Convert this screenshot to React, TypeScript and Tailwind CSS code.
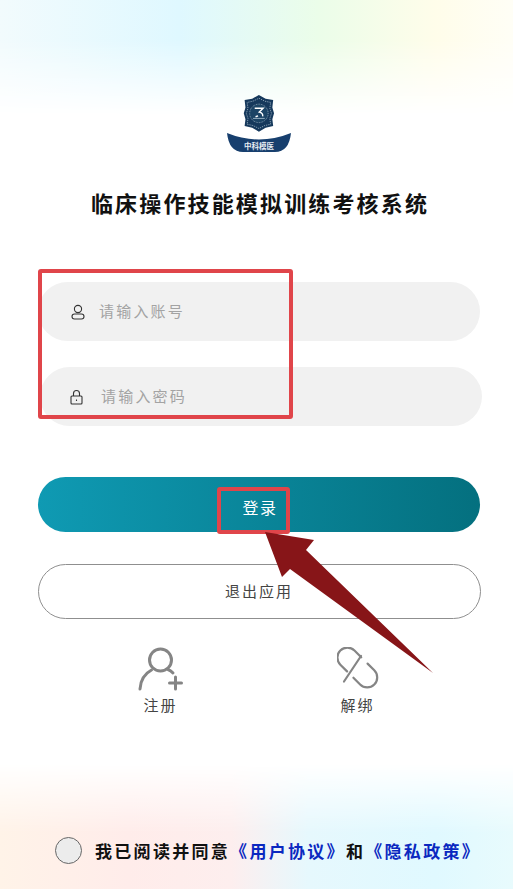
import React from 'react';

const Logo = () => (
  <svg width="70" height="62" viewBox="0 0 70 62">
    {/* badge */}
    <g transform="translate(5.500 -3) scale(0.840)">
      <polygon points="35,7 43,11.500 52,13 51,22 53,29 51,36 52,44 43,46 35,51 27,46 18,44 19,36 17,29 19,22 18,13 27,11.500" fill="#16395c" />
      <polygon points="35,11 42,14.500 49,16 48,23 50,29 48,35 49,42 42,43.500 35,47 28,43.500 21,42 22,35 20,29 22,23 21,16 28,14.500" fill="none" stroke="#b9ccd9" strokeWidth="0.800" strokeDasharray="1.500 1.200" />
      <circle cx="35" cy="29" r="11" fill="#1c4465" stroke="#d5e1e8" strokeWidth="0.700" strokeDasharray="1 1" />
      <path d="M30 23h10l-4.500 4.500c3 .5 4.500 2.500 4 5M31 33l3-1" fill="none" stroke="#ffffff" strokeWidth="1.700" />
      <path d="M28 35h14" stroke="#a9c0cf" strokeWidth="1" />
    </g>
    {/* ribbon */}
    <path d="M3 41q32 13 64 0q-2 19-16 19H19Q5 60 3 41z" fill="#173f6e" />
    <text x="35" y="57" textAnchor="middle" fontSize="7.500" fontWeight="700" fill="#e8eef4" fontFamily="'Noto Sans CJK SC', sans-serif">中科模医</text>
  </svg>
);

const UserIcon = () => (
  <svg width="16" height="16" viewBox="0 0 16 16" fill="none" stroke="#333" strokeWidth="1.100">
    <circle cx="8" cy="5" r="3.600" />
    <rect x="2" y="10" width="12" height="5" rx="2.500" />
  </svg>
);

const LockIcon = () => (
  <svg width="15" height="16" viewBox="0 0 15 16" fill="none" stroke="#333" strokeWidth="1.100">
    <path d="M4.500 7V4.500a3 3 0 0 1 6 0V7" />
    <rect x="2" y="7" width="11" height="8" rx="1" />
    <path d="M7.500 10.500v1.500" />
  </svg>
);

const Arrow = () => (
  <svg className="absolute left-[262px] top-[528px]" width="174" height="150" viewBox="0 0 174 150">
    <polygon points="3,4 52,12 44,22 171,145 28,41 20,49" fill="#871518" />
  </svg>
);

const RegisterIcon = () => (
  <svg width="46" height="44" viewBox="0 0 46 44" fill="none" stroke="#858585" strokeWidth="3" strokeLinecap="round">
    <circle cx="22.500" cy="13" r="11" />
    <path d="M2 42c.5-9 5-15.500 11.500-19M30 22.500c2 .8 3.500 1.800 5 3.500" />
    <path d="M37.500 30v12M31.500 36h12" />
  </svg>
);

const UnbindIcon = () => (
  <svg width="42" height="42" viewBox="0 0 42 42" fill="none" stroke="#858585" strokeWidth="2.200" strokeLinecap="round">
    <g transform="translate(20.300 20.500) rotate(-45)">
      <path d="M-10 -4.500V-14a10 10 0 0 1 20 0V-4.500" />
      <path d="M-10 4.500V14a10 10 0 0 0 20 0V4.500" />
    </g>
    <path d="M24 9 7 34.500" />
  </svg>
);

const App: React.FC = () => {
  return (
    <div className="relative h-[889px] w-[513px] overflow-hidden bg-white font-['Noto_Sans_CJK_SC',sans-serif]">
      {/* pastel wash, top and bottom */}
      <div className="absolute inset-x-0 top-0 h-[115px] bg-[linear-gradient(90deg,#f2fbfd_0%,#dff8ff_35%,#ebfde9_62%,#fffdea_85%,#fffef6_100%)] [mask-image:linear-gradient(180deg,#000_35%,transparent)]" />
      <div className="absolute inset-x-0 bottom-0 h-[125px] bg-[linear-gradient(90deg,#fff3e8_0%,#ffecea_25%,#fdeeee_45%,#e6f8fd_60%,#e0f9ff_85%,#e8fbfd_100%)] [mask-image:linear-gradient(0deg,#000_45%,transparent)]" />

      <div className="relative flex flex-col items-center pl-[5px]">
        <div className="mt-[92px] h-[62px]">
          <Logo />
        </div>
        <h1 className="mt-[33px] translate-x-[1px] text-[22px] leading-[30px] font-bold tracking-[2.150px] text-[#111]">临床操作技能模拟训练考核系统</h1>

        <div className="mt-[65px] flex h-[59px] w-[442px] items-center rounded-full bg-[#f1f1f1] pl-[32px]">
          <UserIcon />
          <span className="ml-[13px] text-[15px] tracking-[2.200px] text-[#a3a3a3]">请输入账号</span>
        </div>
        <div className="mt-[26px] flex h-[59px] w-[442px] translate-x-[2px] items-center rounded-full bg-[#f1f1f1] pl-[29px]">
          <LockIcon />
          <span className="ml-[17px] text-[15px] tracking-[2.200px] text-[#a3a3a3]">请输入密码</span>
        </div>

        <button className="mt-[51px] flex h-[55px] w-[442px] items-center justify-center rounded-full bg-[linear-gradient(90deg,#0f9ab3,#04707f)] pt-[4px] pl-[2px] text-[16px] tracking-[1.500px] text-white">
          登录
        </button>
        <button className="mt-[32px] flex h-[55px] w-[443px] items-center justify-center rounded-full border border-[#8f8f8f] bg-white text-[15px] tracking-[2px] text-[#444]">
          退出应用
        </button>

        <div className="mt-[28px] flex w-[257px] justify-between">
          <div className="flex w-[60px] flex-col items-center">
            <RegisterIcon />
            <span className="mt-[4px] text-[15px] leading-[20px] tracking-[2px] text-[#444]">注册</span>
          </div>
          <div className="flex w-[60px] flex-col items-center">
            <UnbindIcon />
            <span className="mt-[6px] text-[15px] leading-[20px] tracking-[2px] text-[#444]">解绑</span>
          </div>
        </div>
      </div>

      {/* annotations drawn on the screenshot */}
      <div className="absolute left-[38px] top-[269px] h-[150px] w-[255px] rounded-[3px] border-[4px] border-[#e0454a]" />
      <div className="absolute left-[217px] top-[487px] h-[47px] w-[73px] rounded-[3px] border-[4px] border-[#e0454a]" />
      <Arrow />

      <div className="absolute left-[55px] top-[837px] flex items-center">
        <div className="h-[27px] w-[27px] rounded-full border border-[#666] bg-[#ececec]" />
        <p className="ml-[13px] text-[17px] font-bold tracking-[2.300px] whitespace-nowrap text-[#111]">
          我已阅读并同意<span className="text-[#0a28c0]">《用户协议》</span>和<span className="text-[#0a28c0]">《隐私政策》</span>
        </p>
      </div>
    </div>
  );
};

export default App;
